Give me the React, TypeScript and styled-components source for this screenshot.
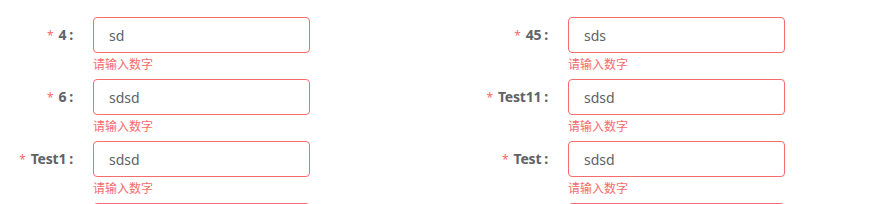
import styled, { createGlobalStyle } from 'styled-components';

const GlobalStyle = createGlobalStyle`
  html, body {
    margin: 0;
    padding: 0;
    background: #ffffff;
    overflow: hidden;
  }
  body {
    font-family: "Noto Sans", "Noto Sans CJK SC", sans-serif;
  }
`;

interface IField {
  label: string;
  value: string;
}

const rows: IField[][] = [
  [
    { label: '4', value: 'sd' },
    { label: '45', value: 'sds' },
  ],
  [
    { label: '6', value: 'sdsd' },
    { label: 'Test11', value: 'sdsd' },
  ],
  [
    { label: 'Test1', value: 'sdsd' },
    { label: 'Test', value: 'sdsd' },
  ],
  [
    { label: 'Test2', value: 'sdsd' },
    { label: 'Test3', value: 'sdsd' },
  ],
];

const labelWidths = [93, 258];

export default function App() {
  return (
    <>
      <GlobalStyle />
      <FormSt>
        {rows.map((row, i) =>
          row.map(({ label, value }, j) => (
            <FormItem key={`${i}-${j}`}>
              <LabelSt width={labelWidths[j]}>
                <Star>*</Star>
                {label}
                <Colon>:</Colon>
              </LabelSt>
              <Content>
                <InputSt defaultValue={value} />
                <ErrorSt>请输入数字</ErrorSt>
              </Content>
            </FormItem>
          ))
        )}
      </FormSt>
    </>
  );
}

const FormSt = styled.form`
  display: grid;
  grid-template-columns: 310px 475px;
  row-gap: 8px;
  padding-top: 17px;
`;

const FormItem = styled.div`
  display: flex;
  align-items: flex-start;
`;

const LabelSt = styled.label<{ width: number }>`
  flex: none;
  width: ${({ width }) => width}px;
  box-sizing: border-box;
  padding-right: 20px;
  text-align: right;
  font-size: 14px;
  line-height: 36px;
  font-weight: 700;
  color: #606266;
  white-space: nowrap;
  letter-spacing: -0.2px;
`;

const Star = styled.span`
  color: #f56c6c;
  font-weight: 400;
  font-size: 12px;
  margin-right: 5px;
`;

const Colon = styled.span`
  margin-left: 3px;
`;

const Content = styled.div`
  width: 217px;
  display: flex;
  flex-direction: column;
`;

const InputSt = styled.input`
  box-sizing: border-box;
  width: 100%;
  height: 36px;
  padding: 0 15px;
  border: 1px solid #f56c6c;
  border-radius: 4px;
  font-family: "Noto Sans", "Noto Sans CJK SC", sans-serif;
  font-size: 14px;
  color: #606266;
  background: #ffffff;
  outline: none;
`;

const ErrorSt = styled.div`
  padding-top: 6px;
  font-size: 12px;
  line-height: 12px;
  color: #f56c6c;
`;
